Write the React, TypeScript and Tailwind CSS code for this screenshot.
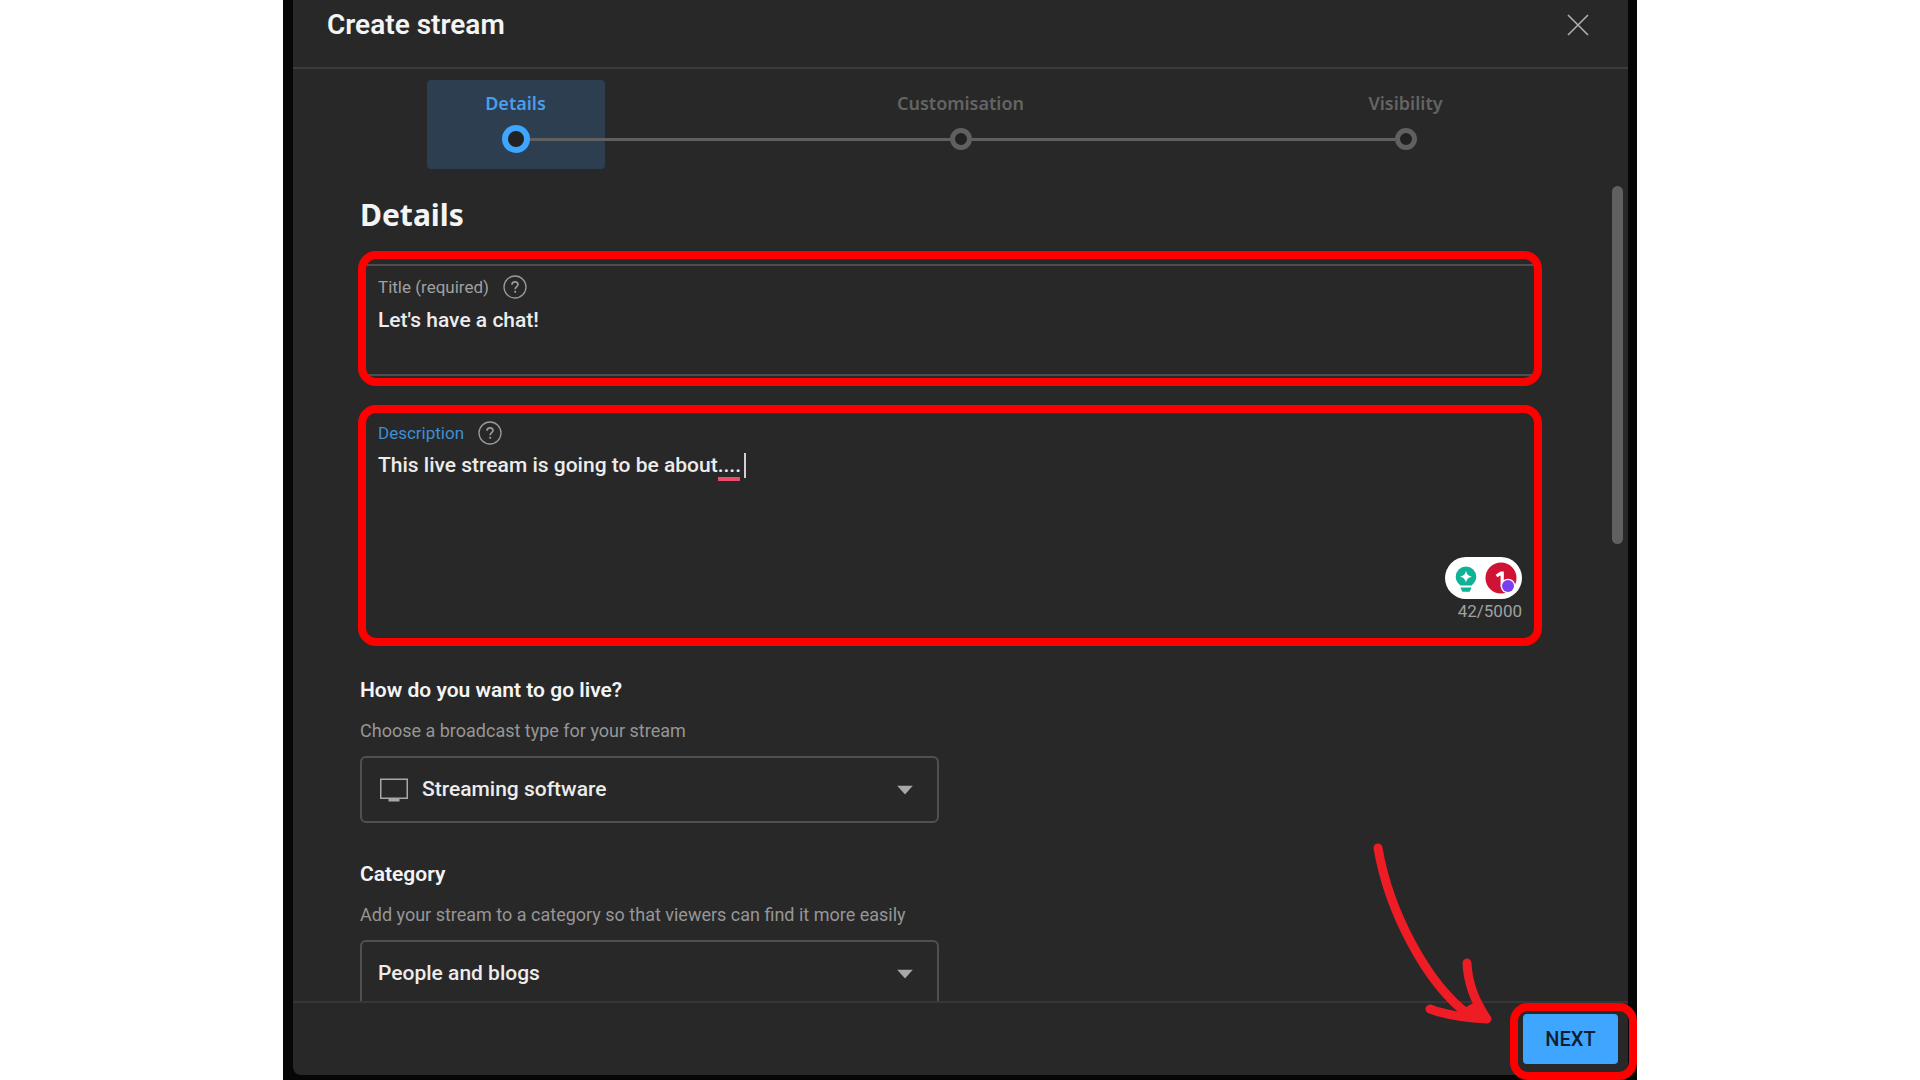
import { useState } from "react";

const steps = [
  { name: "Details", active: true },
  { name: "Customisation", active: false },
  { name: "Visibility", active: false },
];

function Stepper() {
  return (
    <ol className="grid h-[116px] shrink-0 grid-cols-3">
      {steps.map((step, i) => (
        <li key={step.name} className="relative flex flex-col items-center pt-[22px]">
          {step.active && (
            <span className="absolute top-[11px] h-[89px] w-2/5 rounded bg-[#2c3e50]" />
          )}
          <button
            type="button"
            className={
              step.active
                ? "relative font-['Noto_Sans'] text-lg leading-6 font-semibold text-[#4a9fe8]"
                : "relative font-['Noto_Sans'] text-lg leading-6 font-semibold text-[#646464]"
            }
          >
            {step.name}
          </button>
          <div className="relative mt-2.5 flex h-7 w-full items-center">
            <span className={i > 0 ? "h-[3px] flex-1 bg-[#606060]" : "flex-1"} />
            <span
              className={
                step.active
                  ? "size-7 rounded-full border-[6px] border-[#3ea6ff] bg-[#222]"
                  : "size-[22px] rounded-full border-5 border-[#606060] bg-[#222]"
              }
            />
            <span className={i < steps.length - 1 ? "h-[3px] flex-1 bg-[#606060]" : "flex-1"} />
          </div>
        </li>
      ))}
    </ol>
  );
}

function HelpIcon() {
  return (
    <svg viewBox="0 0 24 24" className="size-6" fill="none" stroke="#9a9a9a" aria-hidden="true">
      <circle cx="12" cy="12" r="11" strokeWidth="1.3" />
      <path d="M9 9.8c0-1.8 1.3-2.9 3-2.9s3 1.1 3 2.7c0 2-2.8 2.3-2.8 4.6" strokeWidth="1.7" />
      <path d="M12.2 15.8v1.9" strokeWidth="1.9" />
    </svg>
  );
}

function Caret() {
  return (
    <svg
      viewBox="0 0 16 9"
      className="pointer-events-none absolute top-1/2 right-[26px] h-[9px] w-4 -translate-y-1/2"
      aria-hidden="true"
    >
      <path d="M0 0h16L8 9z" fill="#a8a8a8" />
    </svg>
  );
}

function MonitorIcon() {
  return (
    <svg
      viewBox="0 0 28 24"
      className="pointer-events-none absolute top-1/2 left-5 h-6 w-7 -translate-y-1/2"
      aria-hidden="true"
    >
      <rect x=".75" y="1.25" width="26.5" height="19" fill="none" stroke="#a8a8a8" strokeWidth="1.5" />
      <path d="M8.500 20.500h11v3h-11z" fill="#a8a8a8" />
    </svg>
  );
}

function WritingAssistant() {
  return (
    <button
      type="button"
      aria-label="Writing suggestions"
      className="flex h-[42px] w-[77px] items-center rounded-full bg-white"
    >
      <svg viewBox="0 0 77 42" className="h-[42px] w-[77px]" aria-hidden="true">
        <path
          d="M21 9.500a10.300 10.300 0 0 0-10.300 10.300c0 4 2.300 6.400 4.800 8.700h11c2.500-2.300 4.800-4.700 4.800-8.700A10.300 10.300 0 0 0 21 9.500z"
          fill="#0fb197"
        />
        <path d="M15.500 30.500h11l-1.800 4.200h-7.400z" fill="#0fb197" />
        <path d="M21 13.800c1 3.800 2 4.900 5.800 5.900-3.800 1-4.800 2.100-5.800 5.900-1-3.800-2-4.900-5.800-5.900 3.800-1 4.800-2.100 5.800-5.900z" fill="#fff" />
        <circle cx="56" cy="21" r="15.500" fill="#d01335" />
        <path d="M51.500 19l4.500-2.800h1.200V30" fill="none" stroke="#fff" strokeWidth="3.200" />
        <circle cx="63" cy="29" r="7.300" fill="#fff" />
        <circle cx="63" cy="29" r="6" fill="#7a3ff0" />
      </svg>
    </button>
  );
}

function Arrow() {
  return (
    <svg
      viewBox="0 0 124 186"
      className="pointer-events-none absolute right-[133px] bottom-[49px] h-[186px] w-[124px]"
      fill="none"
      stroke="#ee1c25"
      strokeWidth="9"
      strokeLinecap="round"
      strokeLinejoin="round"
      aria-hidden="true"
    >
      <path d="M7 8C18 72 56 144 98 175" />
      <path d="M59 169C75 175 97 178 116 179C107 166 97 148 96 123" />
      <path d="M92 172l10-6 12 12z" fill="#ee1c25" strokeWidth="5" />
    </svg>
  );
}

const selectClass =
  "h-[67px] w-full appearance-none rounded-md border-2 border-[#505050] bg-transparent text-[21px] font-medium text-[#ececec]";

export default function App() {
  const [title, setTitle] = useState("Let's have a chat!");
  const [description, setDescription] = useState("This live stream is going to be about....");

  return (
    <div className="h-screen bg-white font-['Roboto',sans-serif]">
      <div className="mx-auto flex h-full w-full max-w-[1354px] flex-col bg-[#060606] pr-[9px] pb-[5px] pl-2.5">
        <section
          role="dialog"
          aria-label="Create stream"
          className="relative flex min-h-0 flex-1 flex-col rounded-b-lg bg-[#282828]"
        >
          <header className="flex h-[69px] shrink-0 items-start justify-between border-b-2 border-[#3c3c3c] pt-2 pr-[33px] pl-[34px]">
            <h1 className="text-[28px] leading-[34px] font-semibold text-[#f4f4f4]">Create stream</h1>
            <button type="button" aria-label="Close" className="p-1.5">
              <svg viewBox="0 0 22 22" className="size-[22px]" stroke="#b0b0b0" strokeWidth="1.6" aria-hidden="true">
                <path d="M1 1l20 20M21 1L1 21" />
              </svg>
            </button>
          </header>

          <Stepper />

          <div className="flex min-h-0 flex-1 justify-between">
            <div className="min-w-0 flex-1 overflow-hidden pr-[70px] pl-[65px]">
              <h2 className="mt-2 pl-0.5 font-['Noto_Sans'] text-3xl leading-[44px] font-bold text-[#f4f4f4]">
                Details
              </h2>

              <div className="relative mx-0.5 mt-[27px] h-[112px] border-y-2 border-[#4e4e52] px-[18px] pt-[9px]">
                <div className="flex items-center gap-3.5">
                  <label htmlFor="title" className="text-[17px] leading-6 text-[#a0a0a0]">
                    Title (required)
                  </label>
                  <HelpIcon />
                </div>
                <input
                  id="title"
                  value={title}
                  onChange={(e) => setTitle(e.target.value)}
                  className="mt-2 block h-7 w-full bg-transparent text-[21px] font-medium text-[#ececec] outline-none"
                />
                <span className="pointer-events-none absolute -inset-x-0.5 -top-[15px] -bottom-3 rounded-[18px] border-8 border-[#ff0000]" />
              </div>

              <div className="relative mt-[29px] h-[241px] rounded-[18px] border-8 border-[#ff0000] px-3 pt-2">
                <div className="flex items-center gap-3.5">
                  <label htmlFor="description" className="text-[17px] leading-6 text-[#3d8fd6]">
                    Description
                  </label>
                  <HelpIcon />
                </div>
                <div className="relative mt-1.5">
                  <textarea
                    id="description"
                    spellCheck={false}
                    value={description}
                    onChange={(e) => setDescription(e.target.value)}
                    className="block h-[100px] w-full resize-none bg-transparent text-[21px] leading-7 font-medium text-[#ececec] outline-none"
                  />
                  <span className="absolute top-[26px] left-[340px] h-1 w-[22px] bg-[#ef4a6b]" />
                  <span className="absolute top-0.5 left-[366px] h-[25px] w-0.5 bg-[#d0d0d0]" />
                </div>
                <div className="absolute right-3 bottom-[15px] flex flex-col items-end">
                  <WritingAssistant />
                  <span className="text-[17px] leading-6 text-[#a0a0a0]">42/5000</span>
                </div>
              </div>

              <div className="mt-[30px] flex w-[581px] max-w-full flex-col pl-0.5">
                <label htmlFor="type" className="text-[21px] leading-7 font-semibold text-[#f4f4f4]">
                  How do you want to go live?
                </label>
                <p className="mt-[15px] text-lg leading-6 text-[#969696]">Choose a broadcast type for your stream</p>
                <div className="relative mt-[13px]">
                  <MonitorIcon />
                  <select id="type" className={`${selectClass} pl-[60px]`}>
                    <option>Streaming software</option>
                  </select>
                  <Caret />
                </div>
              </div>

              <div className="mt-[37px] flex w-[581px] max-w-full flex-col pl-0.5">
                <label htmlFor="category" className="text-[21px] leading-7 font-semibold text-[#f4f4f4]">
                  Category
                </label>
                <p className="mt-[15px] text-lg leading-6 text-[#969696]">
                  Add your stream to a category so that viewers can find it more easily
                </p>
                <div className="relative mt-[13px]">
                  <select id="category" className={`${selectClass} pl-4`}>
                    <option>People and blogs</option>
                  </select>
                  <Caret />
                </div>
              </div>
            </div>
            <div className="flex w-4 shrink-0">
              <span className="mt-px h-[358px] w-[11px] rounded-full bg-[#606060]" />
            </div>
          </div>

          <footer className="flex h-[74px] shrink-0 items-start justify-end border-t-2 border-[#363636] pr-2.5">
            <div className="relative mt-[11px]">
              <button
                type="button"
                className="block h-[50px] w-[95px] rounded-sm bg-[#3ea6ff] text-xl font-medium text-[#0d1f30]"
              >
                NEXT
              </button>
              <span className="pointer-events-none absolute -top-[11px] -right-[19px] -bottom-4 -left-[13px] rounded-[18px] border-8 border-[#ff0000]" />
            </div>
          </footer>
          <Arrow />
        </section>
      </div>
    </div>
  );
}
